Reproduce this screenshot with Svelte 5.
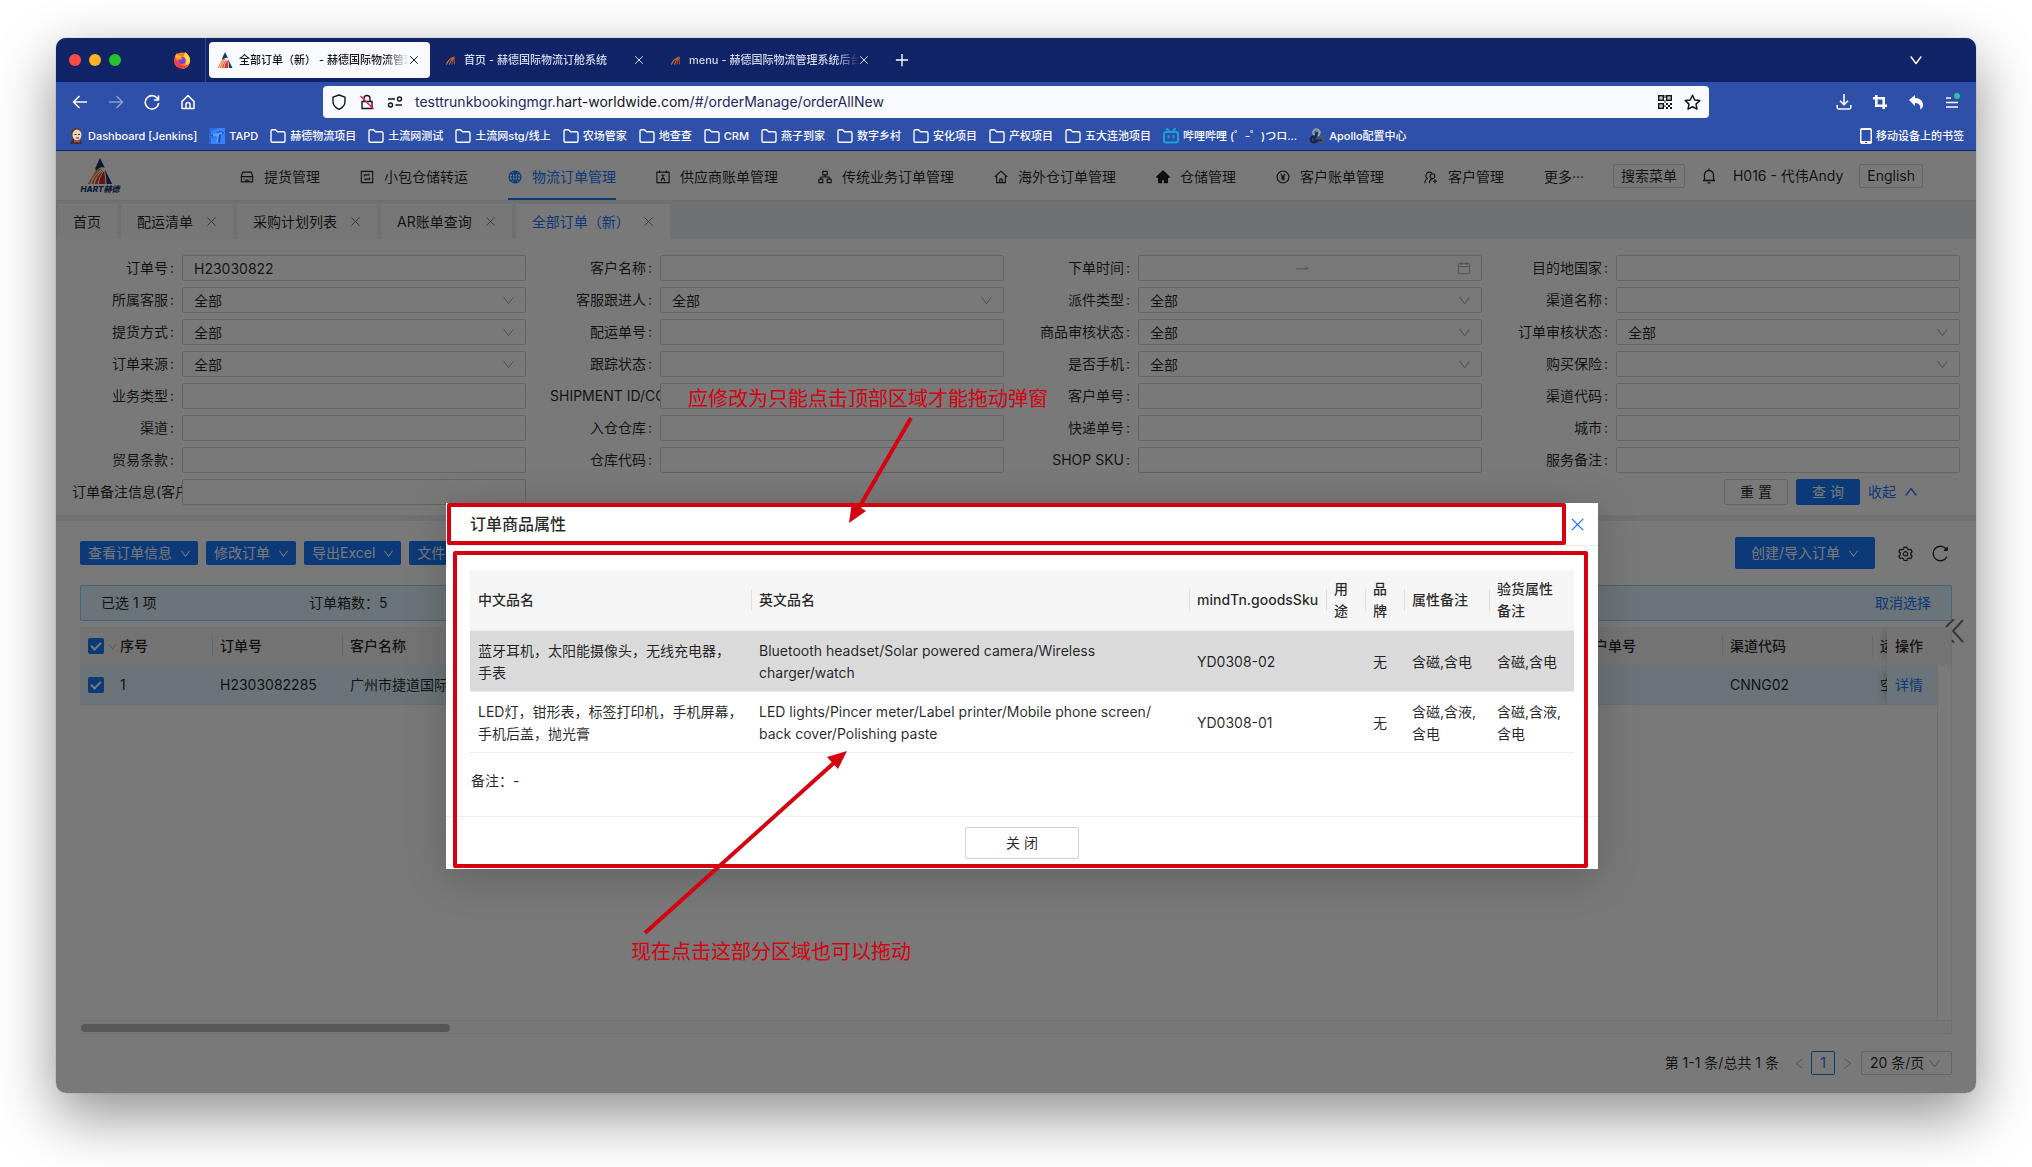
<script>
  const browserTabs = [
    { title: '全部订单（新） - 赫德国际物流管理系统后台', active: true },
    { title: '首页 - 赫德国际物流订舱系统' },
    { title: 'menu - 赫德国际物流管理系统后台管理' },
  ];

  const bookmarks = [
    { icon: 'jenkins', label: 'Dashboard [Jenkins]' },
    { icon: 'tapd', label: 'TAPD' },
    { icon: 'folder', label: '赫德物流项目' },
    { icon: 'folder', label: '土流网测试' },
    { icon: 'folder', label: '土流网stg/线上' },
    { icon: 'folder', label: '农场管家' },
    { icon: 'folder', label: '地查查' },
    { icon: 'folder', label: 'CRM' },
    { icon: 'folder', label: '燕子到家' },
    { icon: 'folder', label: '数字乡村' },
    { icon: 'folder', label: '安化项目' },
    { icon: 'folder', label: '产权项目' },
    { icon: 'folder', label: '五大连池项目' },
    { icon: 'bili', label: '哔哩哔哩 (゜-゜)つロ...' },
    { icon: 'apollo', label: 'Apollo配置中心' },
  ];

  const menu = [
    { icon: 'car', label: '提货管理' },
    { icon: 'parcel', label: '小包仓储转运' },
    { icon: 'globe', label: '物流订单管理', active: true },
    { icon: 'supplier', label: '供应商账单管理' },
    { icon: 'tree', label: '传统业务订单管理' },
    { icon: 'home', label: '海外仓订单管理' },
    { icon: 'homeFill', label: '仓储管理' },
    { icon: 'yen', label: '客户账单管理' },
    { icon: 'users', label: '客户管理' },
  ];

  const pageTabs = [
    { label: '首页' },
    { label: '配运清单', closable: true },
    { label: '采购计划列表', closable: true },
    { label: 'AR账单查询', closable: true },
    { label: '全部订单（新）', closable: true, active: true },
  ];

  const fields = [
    { label: '订单号', value: 'H23030822' },
    { label: '客户名称' },
    { label: '下单时间', type: 'range' },
    { label: '目的地国家' },
    { label: '所属客服', type: 'select', value: '全部' },
    { label: '客服跟进人', type: 'select', value: '全部' },
    { label: '派件类型', type: 'select', value: '全部' },
    { label: '渠道名称' },
    { label: '提货方式', type: 'select', value: '全部' },
    { label: '配运单号' },
    { label: '商品审核状态', type: 'select', value: '全部' },
    { label: '订单审核状态', type: 'select', value: '全部' },
    { label: '订单来源', type: 'select', value: '全部' },
    { label: '跟踪状态' },
    { label: '是否手机', type: 'select', value: '全部' },
    { label: '购买保险', type: 'select', value: '' },
    { label: '业务类型' },
    { label: 'SHIPMENT ID/CODE', long: true },
    { label: '客户单号' },
    { label: '渠道代码' },
    { label: '渠道' },
    { label: '入仓仓库' },
    { label: '快递单号' },
    { label: '城市' },
    { label: '贸易条款' },
    { label: '仓库代码' },
    { label: 'SHOP SKU' },
    { label: '服务备注' },
    { label: '订单备注信息(客户)', long: true },
  ];

  const tools = ['查看订单信息', '修改订单', '导出Excel', '文件上传'];

  const goods = [
    {
      cn: '蓝牙耳机，太阳能摄像头，无线充电器，手表',
      en: 'Bluetooth headset/Solar powered camera/Wireless charger/watch',
      sku: 'YD0308-02',
      brand: '无',
      attr: '含磁,含电',
      check: '含磁,含电',
    },
    {
      cn: 'LED灯，钳形表，标签打印机，手机屏幕，手机后盖，抛光膏',
      en: 'LED lights/Pincer meter/Label printer/Mobile phone screen/ back cover/Polishing paste',
      sku: 'YD0308-01',
      brand: '无',
      attr: '含磁,含液,含电',
      check: '含磁,含液,含电',
    },
  ];

  // 16x16 outline icons, drawn with currentColor
  const paths = {
    close: 'M2 2l12 12M14 2L2 14',
    plus: 'M8 1v14M1 8h14',
    down: 'M2 4l6 8 6-8',
    up: 'M2 12l6-8 6 8',
    left: 'M12 2L4 8l8 6',
    right: 'M4 2l8 6-8 6',
    back: 'M15 8H1.500M7.500 2L1.500 8l6 6',
    forward: 'M1 8h13.500M8.500 2l6 6-6 6',
    reload: 'M14 5.500A6.700 6.700 0 1 0 14.600 9M14.500 1.500v4.500H10',
    refresh: 'M13.800 4.600A6.800 6.800 0 1 0 14 11M14.300 1.800v3.200h-3',
    house: 'M2 7.500L8 1.500l6 6V14.500H2zM6 14.500v-4a2 2 0 0 1 4 0v4',
    shield: 'M8 1L2 3.200V7.500c0 3.500 2.500 6.300 6 7.800 3.500-1.500 6-4.300 6-7.800V3.200z',
    tune: 'M1 5h7M8.500 11H15M1.500 11a2 2 0 1 0 4 0 2 2 0 1 0-4 0M10.500 5a2 2 0 1 0 4 0 2 2 0 1 0-4 0',
    star: 'M8 1.200l2.100 4.400 4.700.600-3.500 3.300.900 4.800L8 12l-4.200 2.300.900-4.800L1.200 6.200l4.700-.600z',
    download: 'M8 0v10.500M4 6.800l4 4 4-4M1.200 11v2.200a1.800 1.800 0 0 0 1.800 1.800h10a1.800 1.800 0 0 0 1.800-1.800V11',
    folder: 'M1 3.200a1.500 1.500 0 0 1 1.500-1.500h3l2 2h6A1.500 1.500 0 0 1 15 5.200v7.600a1.500 1.500 0 0 1-1.500 1.500h-11A1.500 1.500 0 0 1 1 12.800z',
    car: 'M1.500 7.500v6h13v-6l-1.500-5H3zM1.500 7.500h13M4 10.500h1M11 10.500h1M6 13l1-1.500h2l1 1.500',
    parcel: 'M1.500 1.500h13v13h-13zM5 7.500V5.500h5.500L9.500 4.500M11 8.500v2H5.500l1 1',
    globe: 'M1.200 8a6.800 6.800 0 1 0 13.600 0 6.800 6.800 0 1 0-13.600 0M8 1.200v13.600M1.200 8h13.600M2.500 4.500h11M2.500 11.500h11M8 1.200c-4.500 4-4.500 9.600 0 13.600 4.500-4 4.500-9.600 0-13.600',
    supplier: 'M1 2.500h14v12H1zM4 .500v3M12 .500v3M6 6h4M8 5v3.500M5.500 12.500L8 8.500l2.500 4M6 10h4',
    tree: 'M5.500 1.500h5v4h-5zM1 10.500h4.500v4H1zM10.500 10.500H15v4h-4.500zM8 5.500V8M3.200 10.500V8h9.600v2.500',
    home: 'M.800 8L8 1.200 15.200 8M3 6.500v8h10v-8M6.500 14.500v-4h3v4',
    yen: 'M1.200 8a6.800 6.800 0 1 0 13.600 0 6.800 6.800 0 1 0-13.600 0M5.500 4.500L8 8l2.500-3.500M8 8v4M6 8.200h4M6 10.200h4',
    users: 'M3.500 9.500a4 4 0 1 1 5.500-5.800M1 15c0-3 1-4.700 3.500-5.500M7 7a2.700 2.700 0 1 0 5.400 0 2.700 2.700 0 1 0-5.400 0M6 15c.300-3 1.500-4.700 4-5.200M12.500 10.500v4.500M10.300 12.800h4.500',
    bell: 'M8 .500v2M3.500 12V7a4.500 4.500 0 0 1 9 0v5M2 12.500h12M6.500 14.800h3',
    calendar: 'M1.500 3h13v11.500h-13zM1.500 6.500h13M5 1v3.500M11 1v3.500',
    swap: 'M1 9h14l-3.500-3.500',
    gear: 'M6.500 1.200h3l.500 2 1.600.900 2-.600 1.500 2.600-1.500 1.400v1.900l1.500 1.400-1.500 2.600-2-.600-1.600.900-.500 2h-3l-.500-2-1.600-.900-2 .600-1.500-2.600 1.500-1.400V7.500L.900 6.100l1.500-2.600 2 .600 1.600-.900zM5.700 8.400a2.300 2.300 0 1 0 4.600 0 2.300 2.300 0 1 0-4.600 0',
  };
</script>

{#snippet icon(name, size = 16, weight = 1.3)}
  <svg width={size} height={size} viewBox="0 0 16 16" fill="none" stroke="currentColor" stroke-width={weight} stroke-linejoin="round" aria-hidden="true">
    {#if name === 'homeFill'}
      <path d="M8 1L.500 8.200H3v6.300h3.500v-4h3v4H13V8.200h2.500z" fill="currentColor" />
    {:else}
      <path d={paths[name]} />
    {/if}
  </svg>
{/snippet}

{#snippet hartMark(width, height)}
  <svg {width} {height} viewBox="0 0 32 32" aria-hidden="true">
    <path d="M16 0l6 12c-5-2-8 1-11 4l-1-3z" fill="#17376e" />
    <path d="M22 14l9 18h-7c0-6-1-12-2-18z" fill="#17376e" />
    <path d="M9 18c3-4 7-5 11-5C13 16 7 23 4 32H1z" fill="#f08a24" />
    <path d="M20 14C15 18 10 24 8 32H5.500C8 24 13 17 20 14z" fill="#ef6f2e" />
    <path d="M20.500 15C17 20 14 26 13 32H9.500C11 25 15 19 20.500 15z" fill="#e8452c" />
    <path d="M21 16c1 5 1.500 11 1.500 16h-8C15 26 18 20 21 16z" fill="#d93025" />
  </svg>
{/snippet}

<!-- the mark without its navy parts, for dark tabs -->
{#snippet hartMarkSmall()}
  <svg width="9" height="9" viewBox="0 0 22 20" fill="none" stroke-width="2.500" aria-hidden="true">
    <path d="M1 20C4 12 10 5 19 2" stroke="#d08a30" />
    <path d="M8 20C10 13 14 7 20 2" stroke="#d07828" />
    <path d="M14 20c1-7 3-12 6-17l1 17" stroke="#b84a2c" />
  </svg>
{/snippet}

{#snippet cropIcon()}
  <svg width="16" height="16" viewBox="0 0 16 16" fill="none" stroke="currentColor" stroke-width="2.600" aria-hidden="true">
    <path d="M4.300 1v10.700H15M1 4.300h10.700V15" />
  </svg>
{/snippet}

{#snippet bookmarkIcon(name)}
  {#if name === 'jenkins'}
    <svg width="16" height="16" viewBox="0 0 16 16" aria-hidden="true">
      <path d="M2 16l2-5h8l2 5z" fill="#2c3444" />
      <path d="M3 7c-1-4 2-7 5.500-7S14 3 13 7l-2 5H6z" fill="#5a3a2a" />
      <ellipse cx="9" cy="7" rx="4.500" ry="5.500" fill="#f0d6b7" />
      <path d="M6.500 6.500h2M10 6.500h2M8 10h3" stroke="#40302a" />
      <path d="M6 12l3 1.500L12 12v3l-3-1-3 1z" fill="#d33833" />
    </svg>
  {:else if name === 'tapd'}
    <svg width="16" height="16" viewBox="0 0 16 16" aria-hidden="true">
      <path d="M0 0h16v16H0z" fill="#3582fb" />
      <path d="M0 0h9L2 3v13H0z" fill="#2a68d8" />
      <path d="M2 7l10-4 3 2-3 2-1 8-4-2 1-5-4 2z" fill="#1b4fb8" />
      <path d="M4 6l9-2v2l-3 1-1 7H7l1-6-4 1z" fill="#5da0ff" />
    </svg>
  {:else if name === 'bili'}
    <svg width="16" height="16" viewBox="0 0 16 16" fill="none" stroke="#19a0dc" stroke-width="2" stroke-linecap="round" aria-hidden="true">
      <rect x="1" y="4" width="14" height="10.500" rx="2" />
      <path d="M4 1l2.500 2.500M12 1L9.500 3.500M5.500 8v1.500M10.500 8v1.500" />
    </svg>
  {:else if name === 'apollo'}
    <svg width="16" height="16" viewBox="0 0 16 16" fill="none" stroke-width="2.200" stroke-linecap="round" aria-hidden="true">
      <path d="M5 6.500a3.200 3.200 0 1 1 5.500-1M8 4l2.500 5" stroke="#8aa0a8" />
      <path d="M8 5l-3 6.500M4 8.500a3 3 0 1 0 3.500 4H12" stroke="#1c2436" />
      <path d="M10 9.500a2.700 2.700 0 1 1 1 4.500" stroke="#4e5660" />
    </svg>
  {:else}
    {@render icon(name, 16, 1.4)}
  {/if}
{/snippet}

<div class="desktop">
  <div class="window">
    <header class="chrome">
      <div class="titlebar">
        <div class="lights"><i class="red"></i><i class="amber"></i><i class="green"></i></div>
        <svg class="firefox" width="18" height="18" viewBox="0 0 18 18" aria-hidden="true">
          <circle cx="9" cy="9.500" r="8" fill="#ff7a18" />
          <path d="M12 1c3 2 5.500 5 5 9.500C16 15.500 12.500 18 9 17.500 14 15 14 8 10.500 5.500z" fill="#ffd93b" />
          <path d="M2 5l2-3 1.500 2.500L9 5 5 9z" fill="#ffb02a" />
          <path d="M1.500 7C1 13 4 17 9 17.500c3 0 6-2 7-5-3 3-8 3-10-1z" fill="#ff3456" />
          <circle cx="9" cy="9.500" r="3.600" fill="#7b3fe4" />
          <path d="M5 7c2-1 4-1 4.500.500L7 9z" fill="#ff9a22" />
        </svg>
        <nav class="tabs" aria-label="标签页">
          {#each browserTabs as tab}
            <div class="tab" class:active={tab.active}>
              <span class="favicon">
                {#if tab.active}{@render hartMark(16, 16)}{:else}{@render hartMarkSmall()}{/if}
              </span>
              <span class="title">{tab.title}</span>
              <button aria-label="关闭标签页">{@render icon('close', 10, 1.600)}</button>
            </div>
          {/each}
        </nav>
        <button class="new-tab" aria-label="新建标签页">{@render icon('plus', 14, 1.600)}</button>
        <button class="list-tabs" aria-label="所有标签页">{@render icon('down', 14, 1.600)}</button>
      </div>

      <div class="toolbar">
        <button aria-label="后退">{@render icon('back', 16, 1.600)}</button>
        <button class="dim" aria-label="前进">{@render icon('forward', 16, 1.600)}</button>
        <button aria-label="刷新">{@render icon('reload', 16, 1.600)}</button>
        <button aria-label="主页">{@render icon('house', 16, 1.600)}</button>
        <div class="url">
          {@render icon('shield', 16, 1.400)}
          <svg width="16" height="16" viewBox="0 0 16 16" fill="none" stroke="#15141a" stroke-width="1.400" aria-hidden="true">
            <path d="M3 7.500h10v7H3zM5 7V4.500a3 3 0 0 1 6 0V7" />
            <path d="M1.500 2l13 13" stroke="#e22850" stroke-width="1.600" />
          </svg>
          {@render icon('tune', 16, 1.400)}
          <p>testtrunkbookingmgr.<b>hart-worldwide.com</b>/#/orderManage/orderAllNew</p>
          <svg width="14" height="14" viewBox="0 0 14 14" fill="#15141a" aria-hidden="true">
            <path fill-rule="evenodd" d="M0 0h6v6H0zM1.500 1.500v3h3v-3zM8 0h6v6H8zM9.500 1.500v3h3v-3zM0 8h6v6H0zM1.500 9.500v3h3v-3zM2.500 2.500h1v1h-1zM10.500 2.500h1v1h-1zM2.500 10.500h1v1h-1zM6.500 0h1v3h-1zM6.500 5h1v3h-1zM8 8h2v2H8zM12 8h2v2h-2zM10 10h2v2h-2zM8 12h2v2H8zM12 12h2v2h-2zM6.500 10h1v2h-1z" />
          </svg>
          {@render icon('star', 17, 1.400)}
        </div>
        <button aria-label="下载">{@render icon('download', 16, 1.600)}</button>
        <button aria-label="截图">{@render cropIcon()}</button>
        <button aria-label="撤销">
          <svg width="16" height="16" viewBox="0 0 16 16" fill="currentColor" aria-hidden="true"><path d="M1 6l6-5v3c5 0 8 3 8 7 0 2-1 4-3 4.500 1-3 0-6-5-6.500v3z" /></svg>
        </button>
        <button aria-label="菜单">
          <svg width="18" height="18" viewBox="0 0 18 18" stroke="currentColor" stroke-width="1.400" aria-hidden="true">
            <path d="M3 5h5M3 9.500h12M3 14h12" /><circle cx="14" cy="3" r="3" fill="#2ac3a2" stroke="none" />
          </svg>
        </button>
      </div>

      <div class="bookmarks">
        {#each bookmarks as mark}
          <a href="#top">{@render bookmarkIcon(mark.icon)}{mark.label}</a>
        {/each}
        <a class="mobile" href="#top">
          <svg width="12" height="16" viewBox="0 0 12 16" aria-hidden="true"><path fill="currentColor" fill-rule="evenodd" d="M2 0h8a2 2 0 0 1 2 2v12a2 2 0 0 1-2 2H2a2 2 0 0 1-2-2V2a2 2 0 0 1 2-2zM1.500 2v11h9V2zM5 14h2v1H5z" /></svg>移动设备上的书签
        </a>
      </div>
    </header>

    <main>
      <nav class="menu">
        <div class="logo">{@render hartMark(28, 26)}<span>HART赫德</span></div>
        {#each menu as item}
          <a href="#top" class:active={item.active}>{@render icon(item.icon, 14)}{item.label}</a>
        {/each}
        <a href="#top">更多···</a>
        <div class="account">
          <button>搜索菜单</button>
          {@render icon('bell', 16)}
          <span>H016 - 代伟Andy</span>
          <button>English</button>
        </div>
      </nav>

      <div class="page-tabs">
        {#each pageTabs as tab}
          <div class:active={tab.active}>
            {tab.label}
            {#if tab.closable}<button aria-label="关闭">{@render icon('close', 11, 1.200)}</button>{/if}
          </div>
        {/each}
      </div>

      <form class="filters">
        {#each fields as field, i}
          <div class="field">
            <label for="f{i}" class:long={field.long}>{field.label}<span>:</span></label>
            {#if field.type === 'select'}
              <div class="control">
                <select id="f{i}"><option>{field.value}</option></select>
                {@render icon('down', 13, 1.200)}
              </div>
            {:else if field.type === 'range'}
              <div class="control range">
                <input id="f{i}" aria-label="开始日期" />
                {@render icon('swap', 14, 1)}
                <input aria-label="结束日期" />
                {@render icon('calendar', 14, 1)}
              </div>
            {:else}
              <div class="control"><input id="f{i}" value={field.value ?? ''} /></div>
            {/if}
          </div>
        {/each}
        <div class="actions">
          <button type="button">重 置</button>
          <button type="button" class="primary">查 询</button>
          <a href="#top">收起 {@render icon('up', 14, 1.500)}</a>
        </div>
      </form>

      <section class="orders">
        <div class="tools">
          {#each tools as tool}
            <button class="primary">{tool}{@render icon('down', 11, 1.500)}</button>
          {/each}
          <button class="primary create">创建/导入订单{@render icon('down', 11, 1.500)}</button>
          <button class="plain" aria-label="设置">{@render icon('gear', 15)}</button>
          <button class="plain" aria-label="刷新列表">{@render icon('refresh', 17)}</button>
        </div>

        <div class="selection">
          <span>已选 1 项</span>
          <span>订单箱数：5</span>
          <a href="#top">取消选择</a>
        </div>

        <div class="grid">
          <table>
            <colgroup>
              <col class="w-check" /><col class="w-index" /><col class="w-order" /><col />
              <col class="w-code" /><col class="w-code" /><col class="w-cut" /><col class="w-action" /><col class="w-gutter" />
            </colgroup>
            <thead>
              <tr>
                <th class="check"><input type="checkbox" checked aria-label="全选" />{@render icon('down', 9, 1.200)}</th>
                <th class="index">序号</th>
                <th>订单号</th>
                <th>客户名称</th>
                <th>客户单号</th>
                <th>渠道代码</th>
                <th class="cut">运</th>
                <th class="fixed">操作</th>
                <th></th>
              </tr>
            </thead>
            <tbody>
              <tr>
                <td class="check"><input type="checkbox" checked aria-label="选择第 1 行" /></td>
                <td class="index">1</td>
                <td>H2303082285</td>
                <td>广州市捷道国际</td>
                <td></td>
                <td>CNNG02</td>
                <td class="cut">空</td>
                <td class="fixed"><a href="#top">详情</a></td>
                <td class="gutter"></td>
              </tr>
            </tbody>
          </table>
          <div class="rest"></div>
          <div class="scroll"><i></i></div>
        </div>

        <div class="pager">
          <span>第 1-1 条/总共 1 条</span>
          <button aria-label="上一页">{@render icon('left', 13, 1.200)}</button>
          <button class="current">1</button>
          <button aria-label="下一页">{@render icon('right', 13, 1.200)}</button>
          <div class="control size">
            <select aria-label="每页条数"><option>20 条/页</option></select>
            {@render icon('down', 13, 1.200)}
          </div>
        </div>
      </section>

      <svg class="drawer" width="20" height="24" viewBox="0 0 20 24" fill="none" stroke="#777" stroke-width="2" aria-hidden="true">
        <path d="M9 0L1 8M18 1L8 12l10 11M7 21l2 3" />
      </svg>

      <div class="mask"></div>

      <div class="modal" role="dialog" aria-labelledby="goods-title">
        <div class="modal-head">
          <h2 id="goods-title">订单商品属性</h2>
          <button aria-label="关闭弹窗">{@render icon('close', 15, 1.500)}</button>
        </div>
        <div class="modal-body">
          <table>
            <colgroup>
              <col /><col class="g-en" /><col class="g-sku" /><col class="g-one" /><col class="g-one" /><col class="g-attr" /><col class="g-attr" />
            </colgroup>
            <thead>
              <tr>
                <th>中文品名</th>
                <th>英文品名</th>
                <th>mindTn.goodsSku</th>
                <th>用途</th>
                <th>品牌</th>
                <th>属性备注</th>
                <th>验货属性备注</th>
              </tr>
            </thead>
            <tbody>
              {#each goods as row, i}
                <tr class:hover={i === 0}>
                  <td>{row.cn}</td>
                  <td>{row.en}</td>
                  <td>{row.sku}</td>
                  <td></td>
                  <td>{row.brand}</td>
                  <td>{row.attr}</td>
                  <td>{row.check}</td>
                </tr>
              {/each}
            </tbody>
          </table>
          <p>备注：-</p>
        </div>
        <div class="modal-foot"><button>关 闭</button></div>

        <div class="mark mark-head"></div>
        <div class="mark mark-body"></div>
        <svg class="arrows" width="600" height="440" viewBox="0 0 600 440" stroke="#d6000f" fill="#d6000f" aria-hidden="true">
          <path d="M465 -85L411 8" stroke-width="4" />
          <path d="M403 20L406 -1L420 8z" stroke="none" />
          <path d="M199 430L390 258" stroke-width="4" />
          <path d="M401 248L381 254L392 266z" stroke="none" />
        </svg>
        <p class="note note-top">应修改为只能点击顶部区域才能拖动弹窗</p>
        <p class="note note-bottom">现在点击这部分区域也可以拖动</p>
      </div>
    </main>
  </div>
</div>

<style>
  :global(body) {
    background: #fff;
  }
  .desktop,
  .desktop :global(*),
  .desktop :global(*::after) {
    box-sizing: border-box;
  }
  .desktop {
    display: flex;
    flex-direction: column;
    min-height: 100vh;
    padding: 38px 56px 74px;
  }
  .window {
    display: flex;
    flex: 1;
    flex-direction: column;
    overflow: hidden;
    border-radius: 10px;
    box-shadow: 0 22px 60px rgba(0, 0, 0, 0.45), 0 0 1px rgba(0, 0, 0, 0.5);
    font: 14px/22px Inter, 'Noto Sans CJK SC', sans-serif;
    color: rgba(0, 0, 0, 0.85);
  }
  button,
  input,
  select {
    font: inherit;
    color: inherit;
  }
  button {
    display: inline-flex;
    align-items: center;
    justify-content: center;
    padding: 0;
    border: 0;
    background: none;
    white-space: nowrap;
  }
  a {
    color: #1a7aff;
    text-decoration: none;
  }
  svg {
    flex: none;
  }

  /* browser chrome */
  .chrome {
    color: #fbfbfe;
    background: #2f50a8;
    border-bottom: 1px solid #12246a;
    font-size: 11px;
  }
  .titlebar {
    display: flex;
    align-items: center;
    height: 44px;
    background: #122468;
  }
  .lights {
    display: flex;
    gap: 8px;
    margin-left: 13px;
  }
  .lights i {
    width: 12px;
    height: 12px;
    border-radius: 50%;
  }
  .red {
    background: #ff4b47;
  }
  .amber {
    background: #ffb224;
  }
  .green {
    background: #27c22f;
  }
  .firefox {
    margin: 0 14px 0 52px;
  }
  .tabs {
    display: flex;
    gap: 4px;
    padding-left: 3px;
    border-left: 1px solid #38488a;
    height: 44px;
    align-items: center;
  }
  .tab {
    display: flex;
    align-items: center;
    width: 221px;
    height: 36px;
    padding: 0 11px 0 8px;
    border-radius: 4px;
    color: #d3d8ea;
    font-weight: 500;
  }
  .tab.active {
    color: #15141a;
    background: #f9faff;
  }
  .favicon {
    display: flex;
    justify-content: center;
    width: 16px;
    margin-right: 6px;
  }
  .title {
    flex: 1;
    overflow: hidden;
    white-space: nowrap;
    mask-image: linear-gradient(to left, transparent, #000 24px);
  }
  .tab button {
    width: 10px;
  }
  .new-tab {
    margin-left: 15px;
  }
  .list-tabs {
    margin: 0 53px 0 auto;
  }
  .toolbar {
    display: flex;
    align-items: center;
    height: 40px;
    padding: 0 6px;
  }
  .toolbar > button {
    width: 36px;
    height: 32px;
  }
  .dim {
    opacity: 0.45;
  }
  .url {
    display: flex;
    align-items: center;
    flex: 1;
    gap: 12px;
    height: 32px;
    margin: 0 117px;
    padding: 0 8px;
    border-radius: 4px;
    color: #15141a;
    background: #f9faff;
    font-size: 14px;
  }
  .url p {
    flex: 1;
    margin: 0;
    color: #1d2a55;
  }
  .url b {
    font-weight: 400;
    color: #15141a;
  }
  .bookmarks {
    display: flex;
    align-items: center;
    gap: 12px;
    height: 28px;
    padding: 0 12px;
    font-weight: 500;
    white-space: nowrap;
  }
  .bookmarks a {
    display: flex;
    align-items: center;
    gap: 4px;
    color: inherit;
  }
  .bookmarks .mobile {
    margin-left: auto;
  }

  /* application */
  main {
    position: relative;
    display: flex;
    flex: 1;
    flex-direction: column;
    background: #fff;
  }
  .menu {
    display: flex;
    align-items: center;
    height: 50px;
    border-bottom: 1px solid #e4e8ee;
    white-space: nowrap;
  }
  .logo {
    display: flex;
    flex-direction: column;
    align-items: center;
    width: 40px;
    margin: 0 100px 0 24px;
    color: #17376e;
    font-size: 8px;
    line-height: 10px;
    font-weight: 800;
    font-style: italic;
  }
  .menu > a {
    display: flex;
    align-items: center;
    gap: 10px;
    height: 44px;
    margin: 4px 20px 0;
    border-bottom: 2px solid transparent;
    color: inherit;
  }
  .menu > a.active {
    color: #1a7aff;
    border-color: #1a7aff;
  }
  .account {
    display: flex;
    align-items: center;
    gap: 16px;
    margin: 0 53px 0 auto;
  }
  .account button {
    height: 24px;
    padding: 0 7px;
    border: 1px solid #d0d0d0;
    border-radius: 2px;
  }
  .page-tabs {
    display: flex;
    gap: 4px;
    height: 38px;
    padding: 3px 1px 0;
    background: #eceff3;
  }
  .page-tabs div {
    display: flex;
    align-items: center;
    padding: 0 16px;
    background: #fafafa;
  }
  .page-tabs .active {
    color: #1a7aff;
    background: #fff;
  }
  .page-tabs button {
    justify-content: flex-end;
    width: 24px;
    color: #666;
  }
  .filters {
    display: grid;
    grid-template-columns: repeat(4, minmax(0, 1fr));
    gap: 6px 24px;
    padding: 16px 16px 10px;
  }
  .field {
    display: flex;
    align-items: center;
    min-width: 0;
  }
  .field label {
    flex: none;
    width: 110px;
    overflow: hidden;
    line-height: 24px;
    text-align: right;
    white-space: nowrap;
  }
  .field label.long {
    text-align: left;
  }
  .field label span {
    margin: 0 8px 0 2px;
  }
  .control {
    display: flex;
    align-items: center;
    position: relative;
    flex: 1;
    min-width: 0;
    height: 26px;
    border: 1px solid #d0d0d0;
    border-radius: 2px;
    color: rgba(0, 0, 0, 0.85);
  }
  .control input,
  .control select {
    flex: 1;
    width: 100%;
    min-width: 0;
    height: 24px;
    padding: 0 11px;
    border: 0;
    outline: 0;
    appearance: none;
    background: none;
  }
  .control select {
    padding-top: 2px;
  }
  .control > :global(svg) {
    color: #a0a0a0;
    margin-right: 10px;
  }
  .range > :global(svg:nth-child(2)) {
    margin: 0 0 0 8px;
  }
  .actions {
    display: flex;
    grid-column: 4;
    align-items: center;
    justify-content: flex-end;
    gap: 8px;
    padding-right: 42px;
  }
  .actions button {
    width: 64px;
    height: 26px;
    border: 1px solid #d0d0d0;
    border-radius: 2px;
  }
  .actions a {
    display: flex;
    align-items: center;
    gap: 8px;
  }
  button.primary {
    color: #fff;
    border-color: #1a7aff;
    border-radius: 2px;
    background: #1a7aff;
  }
  .orders {
    display: flex;
    flex: 1;
    flex-direction: column;
    padding: 16px 24px 18px;
    border-top: 6px solid #eceff3;
  }
  .tools {
    display: flex;
    align-items: center;
    gap: 8px;
    height: 32px;
  }
  .tools .primary {
    gap: 8px;
    height: 24px;
    padding: 0 7px 0 8px;
  }
  .tools .create {
    height: 32px;
    margin-left: auto;
    padding: 0 16px;
  }
  .tools .plain {
    width: 17px;
    margin-left: 14px;
  }
  .tools .plain:last-child {
    margin: 0 3px 0 10px;
  }
  .selection {
    display: flex;
    align-items: center;
    height: 36px;
    margin: 16px 0 6px;
    padding: 0 20px;
    border: 1px solid #91d0ff;
    border-radius: 2px;
    background: #e2f4fd;
  }
  .selection span {
    width: 208px;
  }
  .selection a {
    margin-left: auto;
  }
  .grid {
    display: flex;
    flex: 1;
    flex-direction: column;
    border-right: 1px solid #ebebeb;
  }
  table {
    width: 100%;
    table-layout: fixed;
    border-spacing: 0;
  }
  th {
    font-weight: 500;
    text-align: left;
  }
  th,
  td {
    padding: 0 8px;
  }
  .grid th,
  .grid td {
    overflow: hidden;
    white-space: nowrap;
  }
  .grid th {
    height: 38px;
    background: #f5f5f5;
  }
  .grid td {
    height: 40px;
    border-bottom: 1px solid #d3e9f5;
    background: #e2f4fd;
  }
  .grid .gutter {
    border-left: 1px solid #ebebeb;
    border-bottom: 0;
    background: #fff;
  }
  .w-check {
    width: 32px;
  }
  .w-index {
    width: 100px;
  }
  .w-order {
    width: 130px;
  }
  .w-code {
    width: 150px;
  }
  .w-cut {
    width: 15px;
  }
  .w-gutter {
    width: 14px;
  }
  .w-action {
    width: 50px;
  }
  .grid .check {
    overflow: visible;
    padding-right: 0;
    font-size: 0;
  }
  .check :global(svg) {
    color: #999;
    margin-left: 4px;
    vertical-align: middle;
  }
  .check input {
    position: relative;
    width: 16px;
    height: 16px;
    margin: 0;
    border-radius: 2px;
    appearance: none;
    background: #1a7aff;
    vertical-align: middle;
  }
  .check input::after {
    content: '';
    position: absolute;
    left: 5px;
    top: 2px;
    width: 6px;
    height: 10px;
    border: solid #fff;
    border-width: 0 2px 2px 0;
    transform: rotate(45deg);
  }
  .grid th:nth-child(n + 3):nth-child(-n + 7) {
    background: linear-gradient(#dcdcdc, #dcdcdc) 0 8px / 1px 22px no-repeat #f5f5f5;
  }
  .grid .cut {
    padding-right: 0;
  }
  .grid .fixed {
    overflow: visible;
    box-shadow: -6px 0 8px -4px rgba(0, 0, 0, 0.2);
    clip-path: inset(0 0 0 -10px);
  }
  .rest {
    flex: 1;
    margin-right: 13px;
    border-right: 1px solid #ebebeb;
  }
  .scroll {
    height: 14px;
    padding: 3px 1px 0;
    border: solid #ebebeb;
    border-width: 1px 0;
    background: #fafafa;
  }
  .scroll i {
    display: block;
    width: 369px;
    height: 8px;
    border-radius: 4px;
    background: #b8b8b8;
  }
  .pager {
    display: flex;
    align-items: center;
    justify-content: flex-end;
    height: 24px;
    margin-top: 17px;
  }
  .pager span {
    margin-right: 8px;
  }
  .pager button {
    width: 24px;
    height: 24px;
    color: #aaa;
  }
  .pager .current {
    color: #1a7aff;
    border: 1px solid #1a7aff;
    border-radius: 2px;
  }
  .pager .size {
    flex: none;
    width: 91px;
    height: 24px;
    margin-left: 2px;
  }
  .size select {
    height: 22px;
    padding: 0 0 0 8px;
  }
  .drawer {
    position: absolute;
    top: 468px;
    right: 11px;
  }
  .mask {
    position: absolute;
    inset: 0;
    background: rgba(0, 0, 0, 0.525);
  }

  /* dialog */
  .modal {
    position: absolute;
    top: 352px;
    left: 390px;
    width: 60%;
    background: #fff;
    box-shadow: 0 8px 40px rgba(0, 0, 0, 0.2);
  }
  .modal-head {
    display: flex;
    align-items: center;
    justify-content: space-between;
    height: 43px;
    padding: 0 13px 0 24px;
    border-bottom: 1px solid #ececec;
  }
  h2 {
    margin: 0;
    font-size: 16px;
    font-weight: 500;
  }
  .modal-head button {
    color: #1a7aff;
  }
  .modal-body {
    padding: 24px;
  }
  .modal-body p {
    margin: 17px 0 0 1px;
  }
  .modal th {
    height: 61px;
    border-bottom: 1px solid #ececec;
    background: #f5f5f5;
  }
  .modal th + th {
    background: linear-gradient(#dedede, #dedede) 0 50% / 1px 22px no-repeat #f5f5f5;
  }
  .modal td {
    height: 61px;
    padding-top: 1px;
    border-bottom: 1px solid #ececec;
  }
  .modal .hover td {
    background: #dadada;
  }
  .g-en {
    width: 438px;
  }
  .g-sku {
    width: 137px;
  }
  .g-one {
    width: 39px;
  }
  .g-attr {
    width: 85px;
  }
  .modal-foot {
    display: flex;
    justify-content: center;
    padding: 10px;
    border-top: 1px solid #ececec;
  }
  .modal-foot button {
    width: 114px;
    height: 32px;
    border: 1px solid #d0d0d0;
    border-radius: 2px;
  }
  .mark {
    position: absolute;
    border: 4px solid #d6000f;
    border-radius: 2px;
  }
  .mark-head {
    inset: 0 32px auto 1px;
    height: 42px;
  }
  .mark-body {
    inset: 48px 10px 1px 7px;
  }
  .arrows {
    position: absolute;
    top: 0;
    left: 0;
    overflow: visible;
  }
  .note {
    position: absolute;
    margin: 0;
    color: #d6000f;
    font-size: 20px;
    line-height: 28px;
    white-space: nowrap;
  }
  .note-top {
    top: -118px;
    left: 242px;
  }
  .note-bottom {
    top: 435px;
    left: 185px;
  }
</style>
